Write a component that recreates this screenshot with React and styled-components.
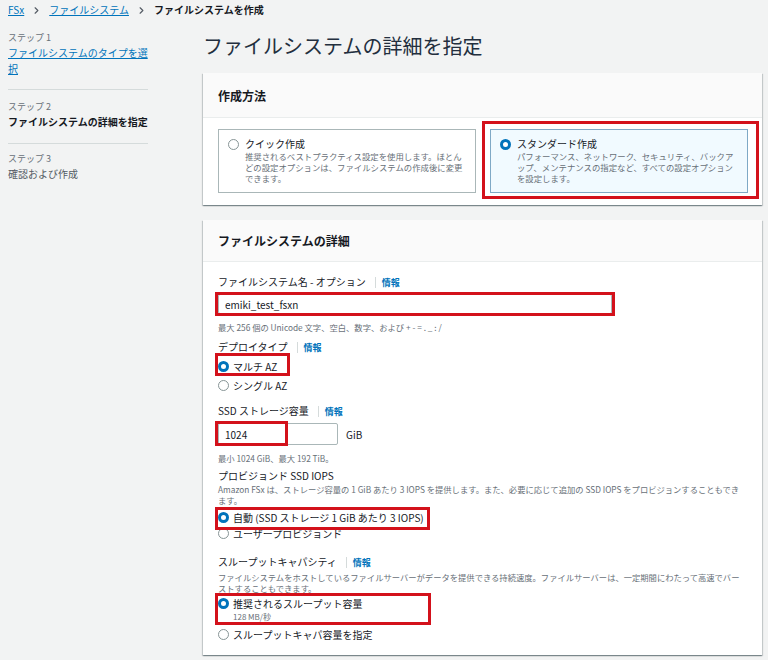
import styled, { createGlobalStyle } from "styled-components";
import { ChevronRight } from "lucide-react";

const GlobalStyle = createGlobalStyle`
  body {
    margin: 0;
    background: #f2f3f3;
    font-family: "Noto Sans CJK JP", "Noto Sans", sans-serif;
    color: #16191f;
  }
`;

const Page = styled.div`
  width: 768px;
  min-height: 660px;
`;

const Breadcrumb = styled.nav`
  display: flex;
  align-items: center;
  gap: 7px;
  height: 20px;
  padding: 0 8px;
  box-sizing: border-box;
  font-size: 10px;
  line-height: 14px;
  color: #545b64;
`;

const Crumb = styled.a`
  color: ${(p) => (p.$current ? "#16191f" : "#0073bb")};
  font-weight: ${(p) => (p.$current ? 700 : 400)};
  text-decoration: ${(p) => (p.$current ? "none" : "underline")};
`;

const Layout = styled.div`
  display: flex;
  align-items: flex-start;
`;

const Sidebar = styled.aside`
  flex: none;
  width: 140px;
  margin-left: 8px;
  padding-top: 11px;
`;

const StepGroup = styled.div`
  padding: ${(p) => p.$pad};
  border-bottom: ${(p) => (p.$last ? "none" : "1px solid #d5dbdb")};
`;

const StepLabel = styled.div`
  font-size: 9px;
  line-height: 14px;
  color: #687078;
`;

const StepName = styled.div`
  font-size: 10px;
  line-height: 16px;
  color: ${(p) => (p.$state === "link" ? "#0073bb" : p.$state === "active" ? "#16191f" : "#545b64")};
  font-weight: ${(p) => (p.$state === "active" ? 700 : 400)};
  text-decoration: ${(p) => (p.$state === "link" ? "underline" : "none")};
`;

const Main = styled.main`
  flex: none;
  width: 559px;
  margin-left: 55px;
`;

const Title = styled.h1`
  margin: 12px 0 13px;
  font-size: 20px;
  line-height: 28px;
  font-weight: 400;
  color: #232f3e;
`;

const Panel = styled.section`
  background: #fff;
  margin-bottom: 15px;
  box-shadow: 0 1px 1px 0 rgba(0, 28, 36, 0.3), 1px 1px 1px 0 rgba(0, 28, 36, 0.15),
    -1px 1px 1px 0 rgba(0, 28, 36, 0.15);
`;

const PanelHeader = styled.h2`
  display: flex;
  align-items: center;
  height: ${(p) => p.$h}px;
  margin: 0;
  padding: 0 15px;
  background: #fafafa;
  border-bottom: 1px solid #eaeded;
  box-sizing: border-box;
  font-size: 12px;
  font-weight: 700;
`;

const Tiles = styled.div`
  display: grid;
  grid-template-columns: 1fr 1fr;
  gap: 14px;
  padding: 11px 14px 12px 15px;
`;

const Tile = styled.div`
  display: flex;
  gap: 6px;
  height: 64px;
  box-sizing: border-box;
  padding: 7px 8px 5px 9px;
  border: 1px solid ${(p) => (p.$on ? "#7fa9c6" : "#aab7b8")};
  background: ${(p) => (p.$on ? "#f1faff" : "#fff")};
`;

const TileTitle = styled.div`
  font-size: 10px;
  line-height: 14px;
`;

const TileText = styled.div`
  font-size: 8.4px;
  line-height: 11px;
  color: #687078;
  white-space: nowrap;
`;

const Highlight = styled.div`
  position: relative;
  &::after {
    content: "";
    position: absolute;
    inset: ${(p) => p.$inset};
    border: 3px solid #d3111b;
    pointer-events: none;
  }
`;

const Radio = styled.span`
  flex: none;
  width: 11px;
  height: 11px;
  margin-top: ${(p) => p.$mt || 0}px;
  border-radius: 50%;
  box-sizing: border-box;
  background: #fff;
  border: ${(p) => (p.$on ? "3.5px solid #0073bb" : "1px solid #879596")};
`;

const Body = styled.div`
  padding: 12px 15px 13px;
`;

const Label = styled.div`
  display: flex;
  align-items: center;
  margin-top: ${(p) => p.$mt || 0}px;
  font-size: 10px;
  line-height: 16px;
`;

const Info = styled.a`
  margin-left: 9px;
  padding-left: 6px;
  border-left: 1px solid #d5dbdb;
  line-height: 11px;
  font-size: 9px;
  font-weight: 700;
  color: #0073bb;
`;

const TextInput = styled.input`
  display: block;
  width: ${(p) => p.$w}px;
  height: ${(p) => p.$h}px;
  margin: 0;
  padding: 0 6px;
  box-sizing: border-box;
  border: 1px solid #aab7b8;
  border-radius: 2px;
  font-family: inherit;
  font-size: 10px;
  color: #16191f;
  outline: none;
`;

const Hint = styled.div`
  margin-top: ${(p) => p.$mt || 0}px;
  font-size: 8.3px;
  line-height: ${(p) => p.$lh || 12}px;
  color: #687078;
  white-space: nowrap;
`;

const Option = styled.div`
  display: flex;
  align-items: center;
  gap: 4px;
  height: ${(p) => p.$h}px;
  font-size: 10px;
`;

const Unit = styled.div`
  display: flex;
  align-items: center;
  gap: 8px;
  margin-top: 4px;
  font-size: 10px;
  color: #16191f;
`;

const Sub = styled.div`
  padding-left: 15px;
  font-size: 8px;
  line-height: 11px;
  color: #687078;
`;

const Spacer = styled.div`
  height: ${(p) => p.$h}px;
`;

export default function App() {
  return (
    <Page>
      <GlobalStyle />
      <Breadcrumb>
        <Crumb>FSx</Crumb>
        <ChevronRight size={11} strokeWidth={2.5} />
        <Crumb>ファイルシステム</Crumb>
        <ChevronRight size={11} strokeWidth={2.5} />
        <Crumb $current>ファイルシステムを作成</Crumb>
      </Breadcrumb>
      <Layout>
        <Sidebar>
          <StepGroup $pad="0 0 12px">
            <StepLabel>ステップ 1</StepLabel>
            <StepName $state="link">ファイルシステムのタイプを選択</StepName>
          </StepGroup>
          <StepGroup $pad="10px 0 13px">
            <StepLabel>ステップ 2</StepLabel>
            <StepName $state="active">ファイルシステムの詳細を指定</StepName>
          </StepGroup>
          <StepGroup $pad="8px 0 0" $last>
            <StepLabel>ステップ 3</StepLabel>
            <StepName $state="todo">確認および作成</StepName>
          </StepGroup>
        </Sidebar>
        <Main>
          <Title>ファイルシステムの詳細を指定</Title>
          <Panel>
            <PanelHeader $h={45}>作成方法</PanelHeader>
            <Tiles>
              <Tile>
                <Radio $mt={2} />
                <div>
                  <TileTitle>クイック作成</TileTitle>
                  <TileText>
                    推奨されるベストプラクティス設定を使用します。ほとん
                    <br />
                    どの設定オプションは、ファイルシステムの作成後に変更
                    <br />
                    できます。
                  </TileText>
                </div>
              </Tile>
              <Highlight $inset="-8px -11px -6px -8px">
                <Tile $on>
                  <Radio $on $mt={2} />
                  <div>
                    <TileTitle>スタンダード作成</TileTitle>
                    <TileText>
                      パフォーマンス、ネットワーク、セキュリティ、バックア
                      <br />
                      ップ、メンテナンスの指定など、すべての設定オプション
                      <br />
                      を設定します。
                    </TileText>
                  </div>
                </Tile>
              </Highlight>
            </Tiles>
          </Panel>
          <Panel>
            <PanelHeader $h={42}>ファイルシステムの詳細</PanelHeader>
            <Body>
              <Label>
                ファイルシステム名 - オプション<Info>情報</Info>
              </Label>
              <Spacer $h={4} />
              <Highlight $inset="-2px -3px -2px -3px" style={{ width: 394 }}>
                <TextInput $w={394} $h={20} readOnly value="emiki_test_fsxn" />
              </Highlight>
              <Hint $mt={7}>最大 256 個の Unicode 文字、空白、数字、および + - = . _ : /</Hint>

              <Label $mt={6}>
                デプロイタイプ<Info>情報</Info>
              </Label>
              <Spacer $h={2} />
              <Highlight $inset="-4px 457px 0 -3px">
                <Option $h={19}>
                  <Radio $on />
                  マルチ AZ
                </Option>
              </Highlight>
              <Option $h={19}>
                <Radio />
                シングル AZ
              </Option>

              <Label $mt={8}>
                SSD ストレージ容量<Info>情報</Info>
              </Label>
              <Unit>
                <Highlight $inset="-2px 50px -1px -3px">
                  <TextInput $w={120} $h={22} readOnly value="1024" />
                </Highlight>
                GiB
              </Unit>
              <Hint $mt={7}>最小 1024 GiB、最大 192 TiB。</Hint>

              <Label $mt={4}>プロビジョンド SSD IOPS</Label>
              <Hint $lh={11}>
                Amazon FSx は、ストレージ容量の 1 GiB あたり 3 IOPS を提供します。また、必要に応じて追加の SSD IOPS をプロビジョンすることもでき
                <br />
                ます。
              </Hint>
              <Spacer $h={3} />
              <Highlight $inset="-2px 317px -5px -3px">
                <Option $h={16}>
                  <Radio $on />
                  自動 (SSD ストレージ 1 GiB あたり 3 IOPS)
                </Option>
              </Highlight>
              <Option $h={16}>
                <Radio />
                ユーザープロビジョンド
              </Option>

              <Label $mt={13}>
                スループットキャパシティ<Info>情報</Info>
              </Label>
              <Hint $lh={11} $mt={2}>
                ファイルシステムをホストしているファイルサーバーがデータを提供できる持続速度。ファイルサーバーは、一定期間にわたって高速でバー
                <br />
                ストすることもできます。
              </Hint>
              <Spacer $h={1} />
              <Highlight $inset="-2px 316px -3px -3px">
                <Option $h={16}>
                  <Radio $on />
                  推奨されるスループット容量
                </Option>
                <Sub>128 MB/秒</Sub>
              </Highlight>
              <Spacer $h={4} />
              <Option $h={16}>
                <Radio />
                スループットキャパ容量を指定
              </Option>
            </Body>
          </Panel>
        </Main>
      </Layout>
    </Page>
  );
}
